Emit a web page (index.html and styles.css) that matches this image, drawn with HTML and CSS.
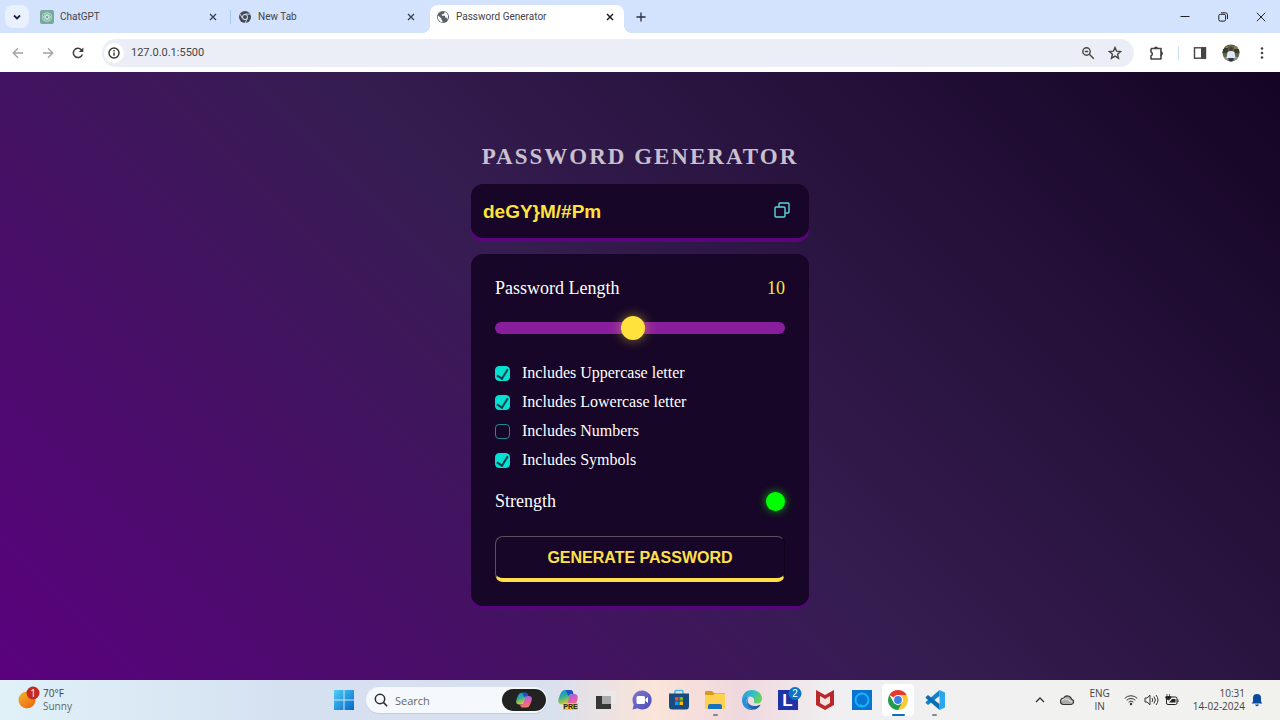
FILE: index.html
```
<!DOCTYPE html>
<html lang="en">
<head>
    <meta charset="UTF-8">
    <meta name="viewport" content="width=device-width, initial-scale=1.0">
    <title>Password Generator</title>
    <link rel="stylesheet" href="styles.css">
</head>
<body>

    <!-- Browser tabs -->
    <header class="tab-strip">
        <button class="tab-search" aria-label="Search tabs">
            <svg width="10" height="10" viewBox="0 0 10 10"><path d="M2 3.5l3 3 3-3" fill="none" stroke="#1f2430" stroke-width="1.8"/></svg>
        </button>
        <div class="tabs">
            <div class="tab">
                <svg class="favicon" viewBox="0 0 14 14"><rect width="14" height="14" rx="2" fill="#74aa9c"/><g fill="none" stroke="#c9e4db" stroke-width="0.600"><ellipse cx="7" cy="5.400" rx="2.400" ry="3.400"/><ellipse cx="7" cy="5.400" rx="2.400" ry="3.400" transform="rotate(60 7 7)"/><ellipse cx="7" cy="5.400" rx="2.400" ry="3.400" transform="rotate(120 7 7)"/><ellipse cx="7" cy="5.400" rx="2.400" ry="3.400" transform="rotate(180 7 7)"/><ellipse cx="7" cy="5.400" rx="2.400" ry="3.400" transform="rotate(240 7 7)"/><ellipse cx="7" cy="5.400" rx="2.400" ry="3.400" transform="rotate(300 7 7)"/></g></svg>
                <span>ChatGPT</span>
                <button class="tab-close" aria-label="Close tab"><svg width="8" height="8" viewBox="0 0 8 8"><path d="M1 1l6 6M7 1L1 7" stroke="#3c404b" stroke-width="1.300"/></svg></button>
            </div>
            <div class="tab divided">
                <svg class="favicon" viewBox="0 0 14 14"><circle cx="7" cy="7" r="6" fill="#454a54"/><circle cx="7" cy="7" r="2.900" fill="#d3e2fd"/><circle cx="7" cy="7" r="2" fill="#454a54"/><path d="M7 4.100h5.300M4.500 8.400L1.900 4M9.500 8.400L7 13" stroke="#d3e2fd" stroke-width="0.900"/></svg>
                <span>New Tab</span>
                <button class="tab-close" aria-label="Close tab"><svg width="8" height="8" viewBox="0 0 8 8"><path d="M1 1l6 6M7 1L1 7" stroke="#3c404b" stroke-width="1.300"/></svg></button>
            </div>
            <div class="tab active">
                <svg class="favicon" viewBox="0 0 14 14"><circle cx="7" cy="7" r="6" fill="#5b5f66"/><path d="M2 5.400l3.400 3.200v1.200l1 1v1.600C3.600 12 1.700 9.800 1.900 6.500zM8.400 1.900v1.200L7.300 4.300H5.800v1.500h3.300v1.800h1.300l.9 1.900C13.300 6 11.400 2.500 8.400 1.900z" fill="#fff"/></svg>
                <span>Password Generator</span>
                <button class="tab-close" aria-label="Close tab"><svg width="8" height="8" viewBox="0 0 8 8"><path d="M1 1l6 6M7 1L1 7" stroke="#1f2023" stroke-width="1.500"/></svg></button>
            </div>
        </div>
        <button class="new-tab" aria-label="New tab"><svg width="10" height="10" viewBox="0 0 10 10"><path d="M5 .5v9M.5 5h9" stroke="#2a2f3a" stroke-width="1.300"/></svg></button>
        <div class="window-controls">
            <button aria-label="Minimize"><svg width="10" height="10" viewBox="0 0 10 10"><path d="M.5 4.500h9" stroke="#222" stroke-width="1"/></svg></button>
            <button aria-label="Restore"><svg width="10" height="10" viewBox="0 0 10 10" fill="none" stroke="#222"><rect x=".8" y="2.300" width="6.800" height="6.800" rx="1.500"/><path d="M3 .8h4.500a2 2 0 0 1 2 2V7"/></svg></button>
            <button aria-label="Close"><svg width="10" height="10" viewBox="0 0 10 10"><path d="M.8.8l8.400 8.400M9.200.8L.8 9.200" stroke="#222" stroke-width="1"/></svg></button>
        </div>
    </header>

    <!-- Address bar -->
    <nav class="toolbar">
        <div class="nav-buttons">
            <button aria-label="Back"><svg width="12" height="12" viewBox="0 0 12 12" fill="none" stroke="#a0a2a6" stroke-width="1.300"><path d="M11 6H1.500M6 1.200L1.200 6 6 10.800"/></svg></button>
            <button aria-label="Forward"><svg width="12" height="12" viewBox="0 0 12 12" fill="none" stroke="#a0a2a6" stroke-width="1.300"><path d="M1 6h9.500M6 1.200L10.800 6 6 10.800"/></svg></button>
            <button aria-label="Reload"><svg width="12" height="12" viewBox="0 0 12 12"><path d="M10.300 7.400A4.600 4.600 0 1 1 9.300 2.800L10.600 4" fill="none" stroke="#3a3c40" stroke-width="1.500"/><path d="M11.300.6v4.500H6.800z" fill="#3a3c40"/></svg></button>
        </div>
        <div class="address">
            <button class="site-info" aria-label="Site information"><svg width="12" height="12" viewBox="0 0 12 12"><circle cx="6" cy="6" r="5" fill="none" stroke="#333" stroke-width="1.400"/><path d="M6 5.400v3.400M6 3.100v1.300" stroke="#333" stroke-width="1.400"/></svg></button>
            <input type="text" value="127.0.0.1:5500" aria-label="Address">
            <button aria-label="Zoom"><svg width="14" height="14" viewBox="0 0 14 14" fill="none" stroke="#444" stroke-width="1.400"><circle cx="5.500" cy="5.500" r="3.700"/><path d="M8.300 8.300l4.500 4.500M3.800 5.500h3.400"/></svg></button>
            <button aria-label="Bookmark"><svg width="14" height="14" viewBox="0 0 14 14"><path d="M7 1.500l1.600 3.700 4 .4-3 2.700.9 3.900L7 10.100l-3.500 2.100.9-3.900-3-2.700 4-.4z" fill="none" stroke="#444" stroke-width="1.400"/></svg></button>
        </div>
        <div class="actions">
            <button aria-label="Extensions"><svg width="16" height="16" viewBox="0 0 16 16"><path d="M2 3.500h10V7M12 10v4H2v-3.300a1.900 1.900 0 0 0 0-3.600V3.500" fill="none" stroke="#444" stroke-width="1.600" stroke-linejoin="round"/><path d="M12 6v5" stroke="#444" stroke-width="1.600"/><path d="M5 3.600a2 2 0 0 1 4 0zM12 6.500a2 2 0 0 1 0 4z" fill="#444"/></svg></button>
            <span class="divider"></span>
            <button aria-label="Side panel"><svg width="14" height="14" viewBox="0 0 14 14"><rect x="1.500" y="1.800" width="11" height="10.400" fill="none" stroke="#444" stroke-width="1.400"/><path d="M8 1.500h5v11H8z" fill="#444"/></svg></button>
            <button aria-label="Profile"><svg width="18" height="18" viewBox="0 0 18 18"><clipPath id="face"><circle cx="9" cy="9" r="8.500"/></clipPath><g clip-path="url(#face)"><path fill="#606447" d="M0 0h18v18H0z"/><path fill="#343d30" d="M0 0h6v9H0zM12 3h6v6h-6z"/><path fill="#83784a" d="M3 1h3v3H3zM12 2h4v3h-4z"/><path fill="#8b8e8b" d="M0 13h18v5H0z"/><path d="M5.500 8q3.500-2 7 0l1 6h-9z" fill="#dfe6f4"/><path d="M6.500 14h5v4h-5z" fill="#333746"/><circle cx="9" cy="5" r="2" fill="#493a35"/></g></svg></button>
            <button aria-label="Menu"><svg width="4" height="14" viewBox="0 0 4 14" fill="#444"><circle cx="2" cy="2.500" r="1.300"/><circle cx="2" cy="7" r="1.300"/><circle cx="2" cy="11.500" r="1.300"/></svg></button>
        </div>
    </nav>

    <!-- Password generator -->
    <main class="page">
        <div class="container">
            <h1>Password Generator</h1>

            <div class="display-container">
                <input type="text" class="display" value="deGY}M/#Pm" aria-label="Password" readonly>
                <button class="copyBtn" aria-label="Copy password">
                    <svg width="16" height="16" viewBox="0 0 16 16" fill="none" stroke="#5fd5d8" stroke-width="1.400" stroke-linejoin="round"><rect x="1" y="5" width="10" height="10" rx="1"/><path d="M5 5V2a1 1 0 0 1 1-1h8a1 1 0 0 1 1 1v8a1 1 0 0 1-1 1h-3"/></svg>
                </button>
            </div>

            <div class="input-container">
                <div class="length-container">
                    <label for="length">Password Length</label>
                    <output class="length-number" for="length">10</output>
                </div>
                <input type="range" class="slider" id="length" min="1" max="20" value="10">

                <div class="checks">
                    <label class="check"><input type="checkbox" checked> Includes Uppercase letter</label>
                    <label class="check"><input type="checkbox" checked> Includes Lowercase letter</label>
                    <label class="check"><input type="checkbox"> Includes Numbers</label>
                    <label class="check"><input type="checkbox" checked> Includes Symbols</label>
                </div>

                <div class="strength-container">
                    <p>Strength</p>
                    <div class="indicator"></div>
                </div>

                <button class="generateBtn">Generate Password</button>
            </div>
        </div>
    </main>

    <!-- Taskbar -->
    <footer class="taskbar">
        <div class="weather">
            <svg width="24" height="28" viewBox="0 0 24 28"><defs><linearGradient id="sun" x2="0.700" y2="1"><stop stop-color="#f5b52b"/><stop offset="1" stop-color="#ec6b12"/></linearGradient></defs><circle cx="10" cy="14" r="8.500" fill="url(#sun)"/><circle cx="16" cy="7" r="6.500" fill="#c42b1c"/><text x="16" y="11" text-anchor="middle" class="badge-text">1</text></svg>
            <div>
                <p>70°F</p>
                <p class="muted">Sunny</p>
            </div>
        </div>

        <div class="dock">
            <button class="start" aria-label="Start"><svg width="20" height="20" viewBox="0 0 20 20"><defs><linearGradient id="win" x2="1" y2="1"><stop stop-color="#4fd0fb"/><stop offset="1" stop-color="#0067c8"/></linearGradient></defs><path d="M0 0h9.500v9.500H0zM10.500 0H20v9.500h-9.500zM0 10.500h9.500V20H0zM10.500 10.500H20V20h-9.500z" fill="url(#win)"/></svg></button>
            <div class="search">
                <svg width="14" height="14" viewBox="0 0 14 14" fill="none" stroke="#2b2b2b" stroke-width="1.500"><circle cx="6" cy="6" r="4.700"/><path d="M9.400 9.400l3.800 3.800"/></svg>
                <input type="text" placeholder="Search" aria-label="Search">
                <button class="copilot" aria-label="Copilot"><svg width="16" height="16" viewBox="0 0 20 20"><use href="#copilot-mark"/></svg></button>
            </div>
            <div class="apps">
                <button aria-label="Copilot preview"><svg width="22" height="22" viewBox="0 0 22 22">
                    <defs>
                        <linearGradient id="cpA" x2="0.300" y2="1"><stop stop-color="#1c8be8"/><stop offset="0.500" stop-color="#2aae9b"/><stop offset="1" stop-color="#d9c82b"/></linearGradient>
                        <linearGradient id="cpB" x2="0.300" y2="1"><stop stop-color="#7d69ef"/><stop offset="0.500" stop-color="#dc5bc2"/><stop offset="1" stop-color="#f77955"/></linearGradient>
                        <g id="copilot-mark"><path d="M7 1h5q2 0 1.600 2L10.500 13q-.8 2.500-3 2.500H4Q-.8 15.500.5 10L2.500 4.500Q4 1 7 1z" fill="url(#cpA)"/><path d="M7.500 1h5q2.500 0 3 4h-2.700q-1.800 0-2.300 2z" fill="#234fc4"/><path d="M13 19.500H8.500q-2.500 0-3.500-4h2q2 0 2.700-2l2-6.500q.6-2 2.700-2H16q4.800 0 3.500 5.500L17.500 16q-1.200 3.500-4.500 3.500z" fill="url(#cpB)"/></g>
                    </defs>
                    <use href="#copilot-mark"/><rect x="5" y="14" width="15" height="7" rx="1" fill="#ffc61a"/><text x="12.500" y="20" text-anchor="middle" class="pre-text">PRE</text></svg></button>
                <button aria-label="Task view"><svg width="22" height="22" viewBox="0 0 22 22"><path d="M8 2h13v13H8z" fill="#e9e9e9"/><path d="M1 7h15v13H1z" fill="#363636"/><path d="M7 7h9v8H7z" fill="#aaa"/></svg></button>
                <button aria-label="Chat"><svg width="22" height="22" viewBox="0 0 22 22"><defs><linearGradient id="chat" x2="1" y2="1"><stop stop-color="#8177cf"/><stop offset="1" stop-color="#4b4eb6"/></linearGradient></defs><path d="M11 1.500a9.500 9.500 0 1 1-4.500 17.800L1.500 20.500l1.200-4.800A9.500 9.500 0 0 1 11 1.500z" fill="url(#chat)"/><rect x="5.500" y="7" width="8.500" height="8" rx="1.500" fill="#fff"/><path d="M14.500 10l2.500-2v6l-2.500-2z" fill="#fff"/></svg></button>
                <button aria-label="Store"><svg width="22" height="22" viewBox="0 0 22 22"><path d="M7 5V2.500q0-1 1-1h6q1 0 1 1V5" fill="none" stroke="#3db9e9" stroke-width="1.500"/><path d="M1 4.500h20V17q0 3.500-3 3.500H4q-3 0-3-3.500z" fill="#174b82"/><path d="M7 8h3.500v3.500H7z" fill="#f25022"/><path d="M11.500 8H15v3.500h-3.500z" fill="#7fba00"/><path d="M7 12.500h3.500V16H7z" fill="#00a4ef"/><path d="M11.500 12.500H15V16h-3.500z" fill="#ffb900"/></svg></button>
                <button class="running" aria-label="File Explorer"><svg width="22" height="22" viewBox="0 0 22 22"><path d="M1 3q0-1 1-1h6l2 2h10q1 0 1 1v4H1z" fill="#d79b16"/><path d="M1 6h8l2-1.500h9q1 0 1 1V19q0 1-1 1H2q-1 0-1-1z" fill="#ffd14f"/><path d="M4 20v-3q0-2 2-2h10q2 0 2 2v3z" fill="#1673b9"/></svg></button>
                <button aria-label="Edge"><svg width="22" height="22" viewBox="0 0 22 22"><defs><linearGradient id="edgeA" x2="1" y2="0.400"><stop stop-color="#249bdd"/><stop offset="0.600" stop-color="#35bfc2"/><stop offset="1" stop-color="#66d557"/></linearGradient><linearGradient id="edgeB" x2="1" y2="1"><stop stop-color="#2898dc"/><stop offset="1" stop-color="#164a96"/></linearGradient></defs><path d="M1 11C1 5 5.500 1 11 1c6 0 10 4 10 8.500 0 3.500-2.600 5-5 5-2.500 0-3.500-.7-3-1.700 1-2.500-1-5.300-4.500-5.300C5 7.500 2 9 1 11z" fill="url(#edgeA)"/><path d="M1 11c1-2.500 4-4 7.500-3.500-2.500 1-3.500 3.500-3 6.500.7 3.500 4 6 7.500 6.500C7 22.500 1 18 1 11z" fill="#2b8fdb"/><path d="M8.500 8c-4 3-1 9 5 9 2.700 0 5-1 6-1.300-1 2.500-4 4.800-7 4.800-4.500-.5-7.500-4-7-8 .2-2 1.300-3.800 3-4.500z" fill="url(#edgeB)"/></svg></button>
                <button aria-label="Launcher"><svg width="26" height="26" viewBox="0 0 26 26"><path d="M2 3h20v20H2z" fill="#1e34a6"/><text x="11.500" y="19" text-anchor="middle" class="launcher-text">L</text><circle cx="19" cy="6.500" r="6.500" fill="#0e73c8"/><text x="19" y="10" text-anchor="middle" class="badge-text">2</text></svg></button>
                <button aria-label="McAfee"><svg width="22" height="22" viewBox="0 0 22 22"><path d="M2 1l9 5 9-5v15l-9 5-9-5z" fill="#ba2929"/><path d="M6 7l5 3 5-3v7l-5 3-5-3z" fill="#f3e2e2"/></svg></button>
                <button aria-label="Alexa"><svg width="22" height="22" viewBox="0 0 22 22"><path d="M1 1h20v20H1z" fill="#0972d3"/><circle cx="11" cy="11" r="6.500" fill="none" stroke="#12b8f5" stroke-width="2"/><path d="M8 18l1-3 4 2z" fill="#12b8f5"/></svg></button>
                <button class="current" aria-label="Chrome"><svg width="22" height="22" viewBox="0 0 22 22"><path d="M11 11L2.340 6A10 10 0 0 1 19.660 6z" fill="#e33b2e"/><path d="M11 11V6h8.660A10 10 0 0 1 11 21z" fill="#fcc934"/><path d="M11 11l4.300 2.500L11 21A10 10 0 0 1 2.340 6l4.400 7.500z" fill="#229c4c"/><circle cx="11" cy="11" r="5" fill="#fff"/><circle cx="11" cy="11" r="3.900" fill="#3b7de9"/></svg></button>
                <button class="running" aria-label="Visual Studio Code"><svg width="22" height="22" viewBox="0 0 22 22"><path d="M15.500 1L21 3.500v15L15.500 21z" fill="#2aa6ee"/><path d="M15.500 1v6L4 16l-2-1.700q-1-.8 0-1.600z" fill="#1282c9"/><path d="M15.500 21v-6L4 6 2 7.700q-1 .8 0 1.600z" fill="#0c6db2"/></svg></button>
            </div>
        </div>

        <div class="tray">
            <svg width="10" height="8" viewBox="0 0 10 8"><path d="M1 6l4-4 4 4" fill="none" stroke="#333" stroke-width="1.300"/></svg>
            <svg width="16" height="12" viewBox="0 0 16 12"><path d="M4 10.500h8.200a2.700 2.700 0 0 0 .4-5.300A4.300 4.300 0 0 0 4.700 4 3.300 3.300 0 0 0 4 10.500z" fill="#aaa" stroke="#333" stroke-width="1.100"/><path d="M2.500 6.500q3-3 6-1l4.500 2.500" fill="none" stroke="#eee"/></svg>
            <div class="language">
                <p>ENG</p>
                <p>IN</p>
            </div>
            <div class="status">
                <svg width="14" height="12" viewBox="0 0 14 12"><g fill="none" stroke="#333"><path d="M.8 4.300a8.800 8.800 0 0 1 12.400 0M2.700 6.300a6.100 6.100 0 0 1 8.600 0M4.600 8.200a3.400 3.400 0 0 1 4.800 0"/></g><circle cx="7" cy="10" r="1.200" fill="#333"/></svg>
                <svg width="15" height="12" viewBox="0 0 15 12"><path d="M1 4h2l3-2.800v9.600L3 8H1zM8 4q1.500 2 0 4M10 2.500q2.800 3.500 0 7M12 1q4 5 0 10" fill="none" stroke="#333"/></svg>
                <svg width="14" height="12" viewBox="0 0 14 12"><rect x="1.500" y="3" width="10.500" height="7.500" rx="1.500" fill="none" stroke="#222"/><path d="M7 5h3.500v3.500H4zM12.500 5.500h1v2.500h-1z" fill="#222"/><path d="M2 0v2.500M4.500 0v2.500M.8 2.500h5v1.800L3.500 6 .8 4.300z" stroke="#222" stroke-width=".7" fill="#222"/></svg>
            </div>
            <div class="clock">
                <p>10:31</p>
                <p>14-02-2024</p>
            </div>
            <svg width="12" height="14" viewBox="0 0 12 14"><path d="M6 1a4 4 0 0 1 4 4v3.500l1.300 2H.7L2 8.500V5a4 4 0 0 1 4-4zM4 11.500h4q-.5 1.800-2 1.800t-2-1.800z" fill="#0a4aa0"/></svg>
        </div>
    </footer>

</body>
</html>
```
FILE: styles.css
```
* {
    margin: 0;
    padding: 0;
    box-sizing: border-box;
}
body {
    min-height: 100vh;
    display: flex;
    flex-direction: column;
    font-family: Roboto, "Open Sans", sans-serif;
    font-size: 10px;
    color: #444;
}
button {
    display: flex;
    align-items: center;
    justify-content: center;
    background: none;
    border: none;
    cursor: pointer;
}
svg {
    display: block;
    flex-shrink: 0;
}
input {
    min-width: 0;
    border: none;
    outline: none;
    background: transparent;
    font-family: inherit;
}

/* browser tabs */
.tab-strip {
    display: flex;
    align-items: center;
    height: 33px;
    padding-left: 5px;
    background: #d3e2fd;
}
.tab-search {
    width: 24px;
    height: 23px;
    border-radius: 8px;
    background: #eaf1fe;
}
.tabs {
    display: flex;
    align-self: stretch;
    margin-left: 3px;
}
.tab {
    display: flex;
    align-items: center;
    gap: 6px;
    width: 198px;
    padding: 0 8px;
    position: relative;
}
.tab span {
    flex: 1;
}
.favicon {
    width: 14px;
    height: 14px;
}
.tab-close {
    width: 18px;
    height: 18px;
}
.divided::before {
    content: "";
    position: absolute;
    left: 0;
    top: 10px;
    width: 1px;
    height: 14px;
    background: #a5c5f8;
}
.tab.active {
    width: 194px;
    margin: 5px 2px 0;
    padding: 0 5px 5px 6px;
    background: #fff;
    border-radius: 8px 8px 0 0;
}
.active::before,
.active::after {
    content: "";
    position: absolute;
    bottom: 0;
    width: 8px;
    height: 8px;
}
.active::before {
    left: -8px;
    background: radial-gradient(circle at top left, transparent 8px, #fff 8px);
}
.active::after {
    right: -8px;
    background: radial-gradient(circle at top right, transparent 8px, #fff 8px);
}
.new-tab {
    width: 24px;
    height: 24px;
    margin-left: 3px;
}
.window-controls {
    display: flex;
    margin-left: auto;
}
.window-controls button {
    width: 38px;
    height: 33px;
}

/* address bar */
.toolbar {
    display: flex;
    align-items: center;
    height: 39px;
    padding: 0 8px;
    background: #fff;
}
.toolbar button {
    width: 20px;
    height: 20px;
}
.nav-buttons {
    display: flex;
    gap: 10px;
    margin-right: 14px;
}
.address {
    flex: 1;
    display: flex;
    align-items: center;
    gap: 7px;
    height: 28px;
    padding: 0 9px 0 2px;
    border-radius: 14px;
    background: #ebeef7;
}
.address input {
    flex: 1;
    font-size: 11px;
    color: #444;
}
.address .site-info {
    border-radius: 50%;
    background: #fff;
}
.actions {
    display: flex;
    align-items: center;
    gap: 11px;
    margin-left: 13px;
}
.divider {
    width: 1px;
    height: 14px;
    background: #c9dcf9;
}

/* generator page */
.page {
    flex: 1;
    display: flex;
    align-items: center;
    justify-content: center;
    padding-bottom: 3px;
    background: linear-gradient(45deg, #5a017e, #351d50, #150424);
    font-family: "Liberation Serif", "Times New Roman", serif;
    font-size: 18px;
    color: #fff;
}
.container {
    width: 338px;
}
h1 {
    margin-bottom: 13px;
    font-size: 23px;
    line-height: 28px;
    letter-spacing: 2px;
    text-align: center;
    text-transform: uppercase;
    white-space: nowrap;
    color: #c8bfcf;
}
.display-container {
    display: flex;
    align-items: center;
    height: 54px;
    margin-bottom: 16px;
    padding: 2px 16px 0 12px;
    border-radius: 12px;
    background: #170627;
    box-shadow: 0 4px #5a047e;
}
.display {
    flex: 1;
    font-family: "Liberation Sans", Arial, sans-serif;
    font-size: 19px;
    font-weight: bold;
    color: #ffe33c;
}
.copyBtn {
    width: 22px;
    height: 22px;
    margin-bottom: 5px;
}
.input-container {
    padding: 24px;
    border-radius: 12px;
    background: #170627;
    box-shadow: 0 3px #55067a;
}
.length-container,
.strength-container {
    display: flex;
    align-items: center;
    justify-content: space-between;
    line-height: 20px;
}
.length-number {
    color: #ffe33c;
}
.slider {
    display: block;
    width: 100%;
    height: 12px;
    margin: 24px 0 30px;
    border-radius: 6px;
    background: #891e9c;
    appearance: none;
    -webkit-appearance: none;
    cursor: pointer;
}
.slider::-webkit-slider-thumb {
    -webkit-appearance: none;
    width: 24px;
    height: 24px;
    border-radius: 50%;
    background: #ffe33c;
    box-shadow: 0 0 12px rgba(255, 227, 60, 0.5);
}
.checks {
    display: grid;
    gap: 11px;
    margin-bottom: 22px;
}
.check {
    display: flex;
    align-items: center;
    gap: 12px;
    font-size: 16px;
    line-height: 18px;
}
.check input {
    display: flex;
    align-items: flex-start;
    justify-content: center;
    width: 15px;
    height: 15px;
    border: 1px solid #1b8c92;
    border-radius: 4px;
    appearance: none;
    -webkit-appearance: none;
    cursor: pointer;
}
.check input:checked {
    border-color: #00e0d3;
    background: #00e0d3;
}
.check input:checked::before {
    content: "";
    width: 5px;
    height: 10px;
    border: solid #0d3c47;
    border-width: 0 2px 2px 0;
    transform: rotate(32deg);
}
.indicator {
    width: 19px;
    height: 19px;
    border-radius: 50%;
    background: #0f0;
    box-shadow: 0 0 8px rgba(0, 255, 0, 0.7);
}
.generateBtn {
    width: 100%;
    height: 46px;
    margin-top: 25px;
    border-style: solid;
    border-color: #5b5060 #0d0316 #ffe04a #5b5060;
    border-width: 1px 1px 4px 1px;
    border-radius: 8px;
    font-family: "Liberation Sans", Arial, sans-serif;
    font-size: 16px;
    font-weight: bold;
    text-transform: uppercase;
    color: #ffe04a;
}

/* taskbar */
.taskbar {
    display: grid;
    grid-template-columns: 1fr auto 1fr;
    align-items: center;
    height: 40px;
    padding: 0 17px;
    background: linear-gradient(to right, #e0f1f8, #d5e1f1 22%, #d9e0ee 43%, #fbe4d8 51%, #efd8de 58%, #f0eff1 65%, #f1f1f1 80%, #f1f1ee);
    font-family: "Open Sans", "Noto Sans", sans-serif;
    line-height: 13px;
}
.weather {
    display: flex;
    align-items: center;
    gap: 2px;
}
.muted {
    color: #666;
}
.badge-text {
    font-size: 10px;
    fill: #fff;
}
.pre-text {
    font-size: 7px;
    font-weight: bold;
    fill: #222;
}
.launcher-text {
    font-size: 17px;
    font-weight: bold;
    fill: #fff;
}
.dock {
    display: flex;
    align-items: center;
    padding-left: 3px;
}
.start {
    width: 24px;
    height: 32px;
    margin-right: 10px;
}
.search {
    display: flex;
    align-items: center;
    gap: 7px;
    width: 181px;
    height: 26px;
    margin-right: 6px;
    padding: 0 1px 0 8px;
    border-radius: 13px;
    background: #f5f9fd;
    box-shadow: 0 1px 1px #c6ced9;
}
.search input {
    flex: 1;
    font-size: 11px;
}
.search input::placeholder {
    color: #666;
}
.copilot {
    width: 44px;
    height: 22px;
    border-radius: 11px;
    background: #222;
}
.apps {
    display: flex;
    justify-content: space-between;
    width: 398px;
}
.apps button {
    width: 32px;
    height: 32px;
    border-radius: 4px;
    position: relative;
}
.apps .current {
    background: #fff;
}
.running::after,
.current::after {
    content: "";
    position: absolute;
    bottom: 0;
    width: 5px;
    height: 2px;
    border-radius: 1px;
    background: #888;
}
.current::after {
    width: 13px;
    background: #0f6cbd;
}
.tray {
    display: flex;
    align-items: center;
    justify-content: flex-end;
    gap: 14px;
}
.language {
    text-align: center;
}
.status {
    display: flex;
    gap: 6px;
}
.clock {
    margin-right: -8px;
    text-align: right;
}
```
